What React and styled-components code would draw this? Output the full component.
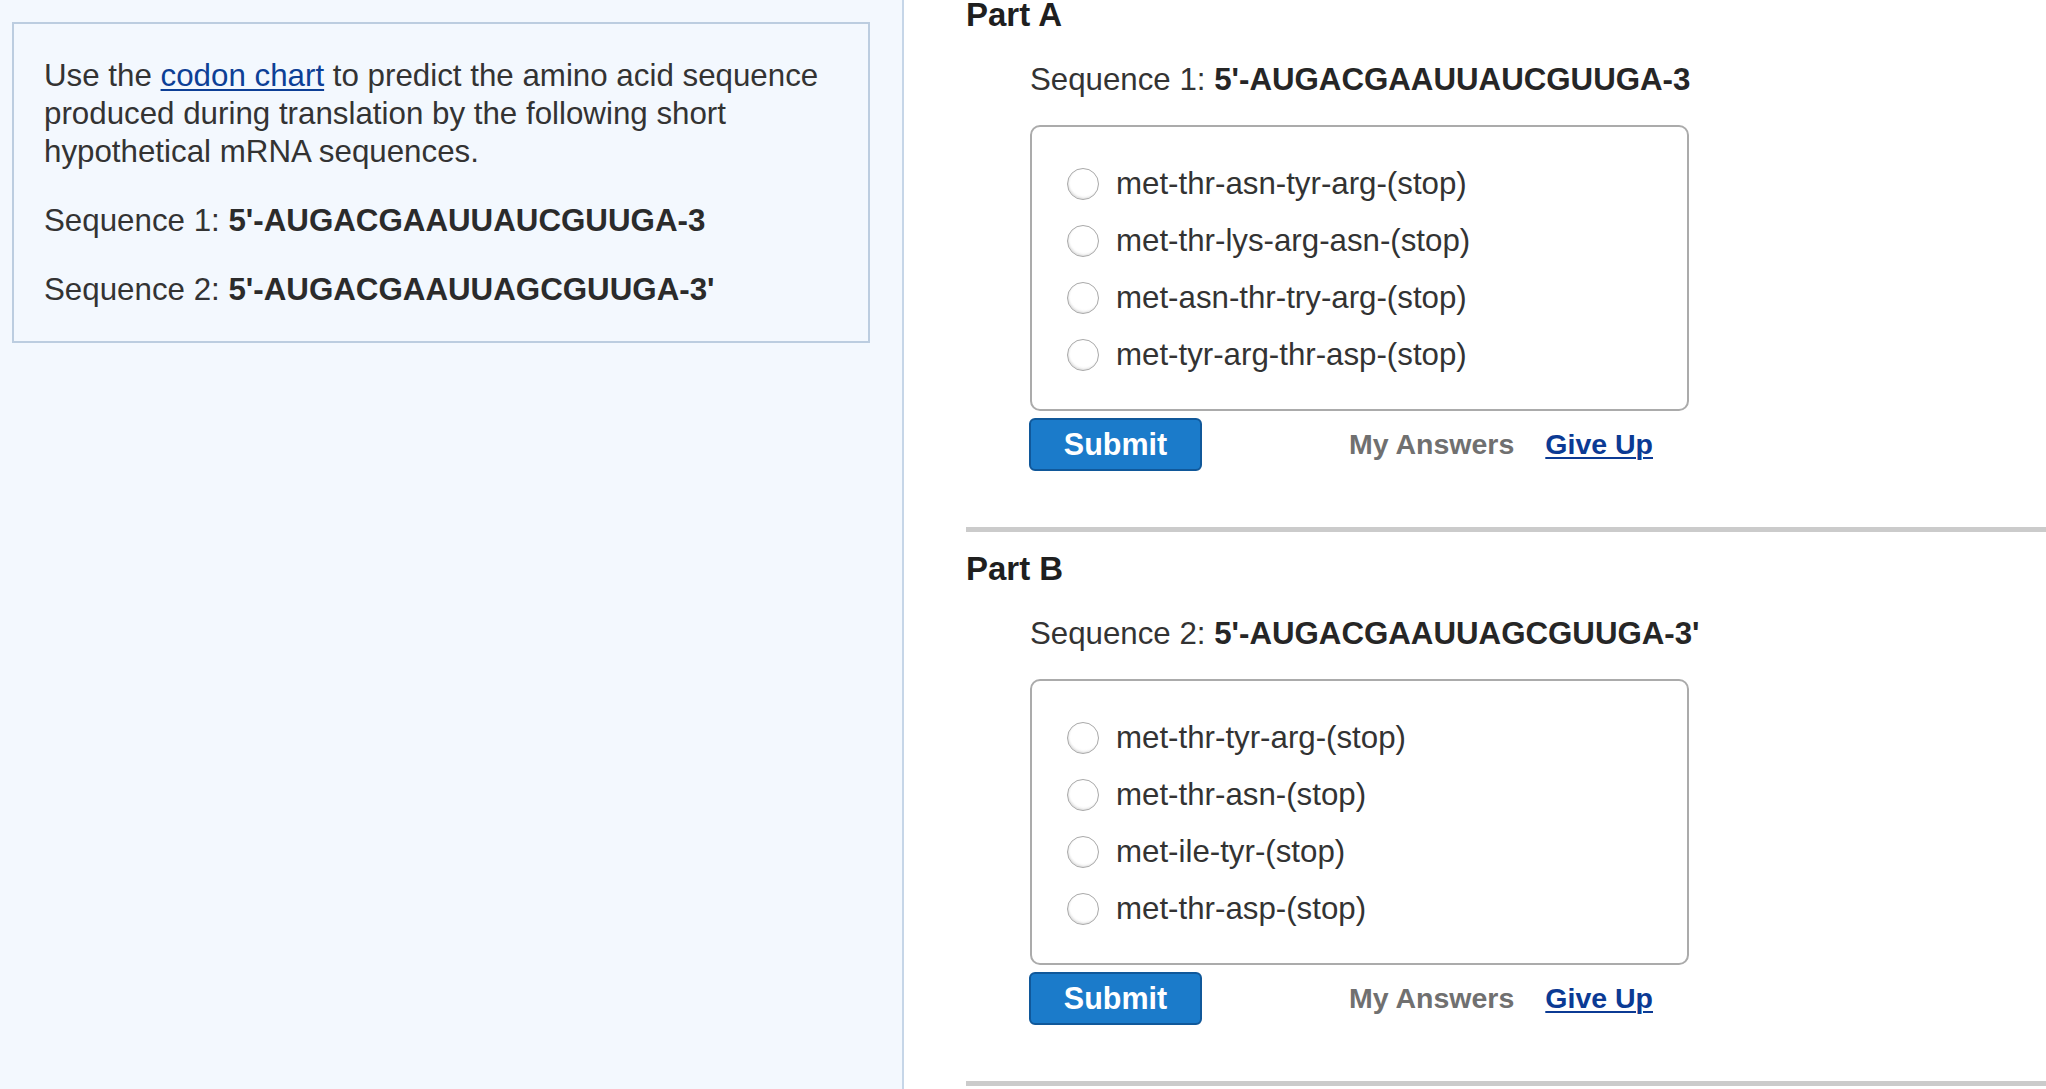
import styled, { createGlobalStyle } from "styled-components";

const GlobalStyle = createGlobalStyle`
  html, body {
    margin: 0;
    padding: 0;
    background: #fff;
  }
  body {
    font-family: "Liberation Sans", Arial, Helvetica, sans-serif;
    color: #333;
  }
  #root {
    min-height: 100vh;
  }
`;

const parts = [
  {
    title: "Part A",
    label: "Sequence 1:",
    sequence: "5'-AUGACGAAUUAUCGUUGA-3",
    options: [
      "met-thr-asn-tyr-arg-(stop)",
      "met-thr-lys-arg-asn-(stop)",
      "met-asn-thr-try-arg-(stop)",
      "met-tyr-arg-thr-asp-(stop)",
    ],
  },
  {
    title: "Part B",
    label: "Sequence 2:",
    sequence: "5'-AUGACGAAUUAGCGUUGA-3'",
    options: [
      "met-thr-tyr-arg-(stop)",
      "met-thr-asn-(stop)",
      "met-ile-tyr-(stop)",
      "met-thr-asp-(stop)",
    ],
  },
];

const App = () => {
  return (
    <>
      <GlobalStyle />
      <Page>
        <IntroPanel>
          <IntroBox>
            <Para>
              Use the <TextLink href="#">codon chart</TextLink> to predict the amino acid
              sequence produced during translation by the following short hypothetical
              mRNA sequences.
            </Para>
            <Para>
              Sequence 1: <b>5'-AUGACGAAUUAUCGUUGA-3</b>
            </Para>
            <Para>
              Sequence 2: <b>5'-AUGACGAAUUAGCGUUGA-3'</b>
            </Para>
          </IntroBox>
        </IntroPanel>

        <PartsColumn>
          {parts.map((part, i) => (
            <PartSection key={part.title}>
              <PartTitle $first={i === 0}>{part.title}</PartTitle>
              <PartBody>
                <Prompt>
                  {part.label} <b>{part.sequence}</b>
                </Prompt>
                <OptionsBox>
                  {part.options.map((opt) => (
                    <OptionRow key={opt}>
                      <Radio type="radio" name={part.title} />
                      {opt}
                    </OptionRow>
                  ))}
                </OptionsBox>
                <Controls>
                  <SubmitButton type="button">Submit</SubmitButton>
                  <MyAnswers>My Answers</MyAnswers>
                  <GiveUp href="#">Give Up</GiveUp>
                </Controls>
              </PartBody>
            </PartSection>
          ))}
        </PartsColumn>
      </Page>
    </>
  );
};

const Page = styled.div`
  display: flex;
  min-height: 100vh;
  overflow: hidden;
`;

const IntroPanel = styled.aside`
  box-sizing: border-box;
  flex: 0 0 904px;
  background: #f3f8fe;
  border-right: 2px solid #c6d6e8;
  padding: 22px 32px 0 12px;
`;

const IntroBox = styled.div`
  border: 2px solid #bccde0;
  padding: 33px 30px 32px;
  font-size: 31.3px;
  line-height: 38px;
  color: #333;
`;

const Para = styled.p`
  margin: 0 0 31px;

  &:last-child {
    margin-bottom: 0;
  }

  b {
    color: #2b2b2b;
  }
`;

const TextLink = styled.a`
  color: #0d3f96;
  text-decoration: underline;
  text-decoration-thickness: 2px;
  text-underline-offset: 3px;
`;

const PartsColumn = styled.main`
  flex: 1;
  min-width: 0;
  padding-left: 62px;
`;

const PartSection = styled.section`
  padding-bottom: 56px;
  border-bottom: 5px solid #cbcbcb;
`;

const PartTitle = styled.h2`
  margin: ${(p) => (p.$first ? "-4px" : "18px")} 0 0;
  font-size: 33px;
  line-height: 37px;
  font-weight: 700;
  color: #1f1f1f;
`;

const PartBody = styled.div`
  padding-left: 64px;
  width: 659px;
`;

const Prompt = styled.p`
  margin: 28px 0 26px;
  font-size: 31.25px;
  line-height: 38px;
  color: #333;
  white-space: nowrap;

  b {
    color: #262626;
  }
`;

const OptionsBox = styled.div`
  box-sizing: border-box;
  height: 286px;
  border: 2px solid #ababab;
  border-radius: 10px;
  padding: 28px 0 26px 35px;
  background: #fff;
`;

const OptionRow = styled.label`
  display: flex;
  align-items: center;
  gap: 17px;
  height: 57px;
  font-size: 31.25px;
  color: #333;
  cursor: pointer;
`;

const Radio = styled.input`
  appearance: none;
  box-sizing: border-box;
  margin: 0;
  width: 32px;
  height: 32px;
  flex: 0 0 32px;
  border-radius: 50%;
  border: 1.5px solid #a9a9a9;
  background: radial-gradient(circle at 55% 35%, #ffffff 60%, #ebebeb 100%);
  box-shadow: inset 1px -1px 2px rgba(0, 0, 0, 0.1);
  cursor: pointer;

  &:checked {
    background: radial-gradient(circle, #1b7cca 35%, #fff 40%);
  }
`;

const Controls = styled.div`
  display: flex;
  align-items: center;
  margin-top: 7px;
  padding-right: 36px;
`;

const SubmitButton = styled.button`
  box-sizing: border-box;
  width: 173px;
  height: 53px;
  margin-left: -1px;
  border: 2px solid #10589a;
  border-radius: 6px;
  background: #1b7bca;
  color: #fff;
  font-family: inherit;
  font-size: 30.5px;
  font-weight: 700;
  cursor: pointer;
`;

const MyAnswers = styled.span`
  margin-left: auto;
  font-size: 28.5px;
  font-weight: 700;
  color: #707070;
`;

const GiveUp = styled.a`
  margin-left: 31px;
  font-size: 28.5px;
  font-weight: 700;
  color: #0b3a94;
  text-decoration: underline;
  text-decoration-thickness: 2px;
  text-underline-offset: 3px;
`;

export default App;
